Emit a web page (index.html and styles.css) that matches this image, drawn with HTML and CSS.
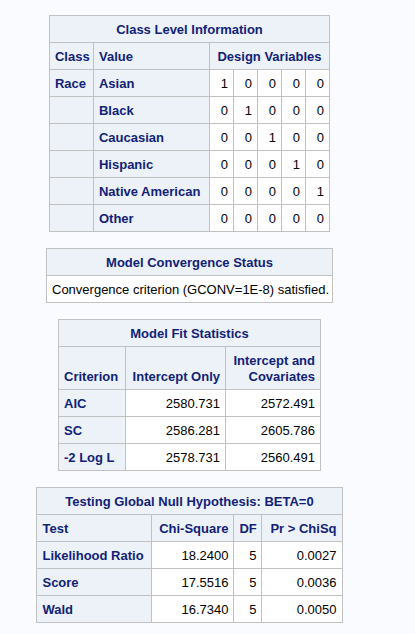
FILE: index.html
```html
<!DOCTYPE html>
<html>
<head>
<meta charset="utf-8">
<link rel="stylesheet" href="styles.css">
</head>
<body>
<div class="page">
  <table class="tbl t-class">
    <colgroup><col class="c44"><col class="c116"><col class="c24"><col class="c24"><col class="c24"><col class="c24"><col class="c24"></colgroup>
    <thead>
      <tr><th class="title" colspan="7">Class Level Information</th></tr>
      <tr><th class="hl">Class</th><th class="hl">Value</th><th class="hc" colspan="5">Design Variables</th></tr>
    </thead>
    <tbody>
      <tr><th class="rh">Race</th><th class="rh">Asian</th><td>1</td><td>0</td><td>0</td><td>0</td><td>0</td></tr>
      <tr><th class="rh"></th><th class="rh">Black</th><td>0</td><td>1</td><td>0</td><td>0</td><td>0</td></tr>
      <tr><th class="rh"></th><th class="rh">Caucasian</th><td>0</td><td>0</td><td>1</td><td>0</td><td>0</td></tr>
      <tr><th class="rh"></th><th class="rh">Hispanic</th><td>0</td><td>0</td><td>0</td><td>1</td><td>0</td></tr>
      <tr><th class="rh"></th><th class="rh">Native American</th><td>0</td><td>0</td><td>0</td><td>0</td><td>1</td></tr>
      <tr><th class="rh"></th><th class="rh">Other</th><td>0</td><td>0</td><td>0</td><td>0</td><td>0</td></tr>
    </tbody>
  </table>

  <table class="tbl t-conv">
    <colgroup><col class="c286"></colgroup>
    <thead><tr><th class="title">Model Convergence Status</th></tr></thead>
    <tbody><tr><td class="tl">Convergence criterion (GCONV=1E-8) satisfied.</td></tr></tbody>
  </table>

  <table class="tbl t-fit">
    <colgroup><col class="c67"><col class="c100"><col class="c95"></colgroup>
    <thead>
      <tr><th class="title" colspan="3">Model Fit Statistics</th></tr>
      <tr><th class="hl">Criterion</th><th class="hr">Intercept Only</th><th class="hr">Intercept and<br>Covariates</th></tr>
    </thead>
    <tbody>
      <tr><th class="rh">AIC</th><td>2580.731</td><td>2572.491</td></tr>
      <tr><th class="rh">SC</th><td>2586.281</td><td>2605.786</td></tr>
      <tr><th class="rh">-2 Log L</th><td>2578.731</td><td>2560.491</td></tr>
    </tbody>
  </table>

  <table class="tbl t-null">
    <colgroup><col class="c115"><col class="c82"><col class="c28"><col class="c80"></colgroup>
    <thead>
      <tr><th class="title" colspan="4">Testing Global Null Hypothesis: BETA=0</th></tr>
      <tr><th class="hl">Test</th><th class="hr">Chi-Square</th><th class="hr">DF</th><th class="hr">Pr &gt; ChiSq</th></tr>
    </thead>
    <tbody>
      <tr><th class="rh">Likelihood Ratio</th><td>18.2400</td><td>5</td><td>0.0027</td></tr>
      <tr><th class="rh">Score</th><td>17.5516</td><td>5</td><td>0.0036</td></tr>
      <tr><th class="rh">Wald</th><td>16.7340</td><td>5</td><td>0.0050</td></tr>
    </tbody>
  </table>
</div>
</body>
</html>
```
FILE: styles.css
```css
html, body {
  margin: 0;
  padding: 0;
  background: #fafbfe;
}
body {
  font-family: "Liberation Sans", Arial, sans-serif;
  font-size: 13px;
  color: #000;
}
.page {
  width: 379px;
  padding-top: 15px;
  display: flex;
  flex-direction: column;
  align-items: center;
  gap: 16px;
}
.tbl {
  border-collapse: separate;
  border-spacing: 0;
  table-layout: fixed;
  border-top: 1px solid #c1c1c1;
  border-left: 1px solid #c1c1c1;
  box-sizing: border-box;
}
.tbl th, .tbl td {
  box-sizing: border-box;
  border-right: 1px solid #c1c1c1;
  border-bottom: 1px solid #c1c1c1;
  padding: 6px 5px 4px 5px;
  height: 27px;
  line-height: 16px;
  white-space: nowrap;
  overflow: hidden;
  vertical-align: bottom;
}
.tbl th {
  background: #edf2f9;
  color: #112277;
  font-weight: bold;
}
.tbl td {
  background: #fff;
  text-align: right;
}
.tbl td.tl { text-align: left; }
.title { text-align: center; }
.hl, .rh { text-align: left; }
.hc { text-align: center; }
.hr { text-align: right; }

.t-class { width: 281px; }
.t-conv { width: 287px; }
.t-fit { width: 263px; }
.t-null { width: 306px; }

.c24 { width: 24px; }
.c44 { width: 44px; }
.c116 { width: 116px; }
.c286 { width: 286px; }
.c67 { width: 67px; }
.c100 { width: 100px; }
.c95 { width: 95px; }
.c115 { width: 115px; }
.c82 { width: 82px; }
.c28 { width: 28px; }
.c80 { width: 80px; }
```
